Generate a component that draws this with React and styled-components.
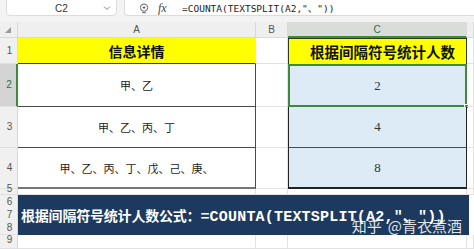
import React from 'react';
import styled, { createGlobalStyle, css } from 'styled-components';

const Global = createGlobalStyle`
  html, body { margin: 0; padding: 0; background: #fff; overflow: hidden; }
  body { font-family: "Noto Sans CJK SC", "Noto Sans", sans-serif; }
  * { box-sizing: border-box; }
`;

const GREEN = '#3f8a3a';
const GRID = '#e2e2e2';
const DARK = '#4a4a4a';

const Page = styled.div`
  width: 474px;
  height: 249px;
  display: flex;
  flex-direction: column;
  background: #f3f3f3;
  overflow: hidden;
`;

const FormulaBar = styled.div`
  height: 22px;
  flex-shrink: 0;
  display: flex;
  align-items: flex-start;
  gap: 7px;
  padding-left: 6px;
`;

const Box = styled.div`
  height: 19px;
  margin-top: -3px;
  padding-top: 3px;
  background: #fff;
  border: 1px solid #dcdcdc;
  border-radius: 4px;
  display: flex;
  align-items: center;
`;

const NameBox = styled(Box)`
  width: 111px;
  justify-content: space-between;
  padding-left: 48px;
  padding-right: 5px;
  font: 10px "Liberation Sans", sans-serif;
  color: #333;
`;

const FxBox = styled(Box)`
  flex: 1;
  border-right: none;
  border-radius: 4px 0 0 4px;
  padding-left: 14px;
  gap: 8px;
`;

const Fx = styled.span`
  font: italic 12px "Liberation Serif", serif;
  color: #444;
  width: 16px;
`;

const FormulaText = styled.span`
  font: 9.5px "DejaVu Sans Mono", "Noto Sans CJK SC", monospace;
  color: #222;
  white-space: pre;
`;

const Sheet = styled.div`
  flex: 1;
  display: grid;
  grid-template-columns: 18px 238px 32px 179px 1fr;
  grid-template-rows: 16px 26px 43px 41px 41px 6px 40px 1fr;
  background: #fff;
`;

const ColHead = styled.div`
  background: ${p => (p.$active ? '#d9dcd9' : '#efefef')};
  color: ${p => (p.$active ? '#217346' : '#555')};
  border-right: 1px solid #dadada;
  border-bottom: ${p => (p.$active ? `2px solid ${GREEN}` : '1px solid #dadada')};
  font: 10px "Liberation Sans", sans-serif;
  display: flex;
  align-items: center;
  justify-content: center;
`;

const Corner = styled(ColHead)`
  justify-content: flex-start;
  align-items: flex-end;
  padding: 0 0 4px 5px;
`;

const RowHead = styled.div`
  background: ${p => (p.$active ? '#d4d4d4' : '#f0f0f0')};
  color: ${p => (p.$active ? '#217346' : '#555')};
  border-right: ${p => (p.$active ? `2px solid ${GREEN}` : '1px solid #dadada')};
  border-bottom: 1px solid #e0e0e0;
  font: 10px "Liberation Sans", sans-serif;
  display: flex;
  flex-direction: column;
  align-items: center;
  justify-content: ${p => p.$justify || 'center'};
  line-height: 10px;
  overflow: visible;
  padding-left: 2px;
`;

const Cell = styled.div`
  display: flex;
  align-items: center;
  justify-content: center;
  position: relative;
  border-right: 1px solid ${GRID};
  border-bottom: 1px solid ${GRID};
  color: #222;
  font-size: 11px;
  white-space: nowrap;
  ${p => p.$kind === 'head' && css`
    background: #ffff00;
    font-size: 14px;
    font-weight: 700;
    color: #111;
    border-bottom: 1px solid #3a3a2a;
  `}
  ${p => p.$framed && css`
    border: 1.5px solid #2c3b1c;
    border-bottom: none;
    padding-left: 10px;
    font-size: 14.5px;
  `}
  ${p => p.$kind === 'info' && css`
    border-right: 1px solid ${DARK};
    border-bottom: ${p.$last ? '2px solid #777' : `1px solid ${DARK}`};
  `}
  ${p => p.$kind === 'count' && css`
    background: #ddebf7;
    border-left: 1px solid #222;
    border-right: 1px solid #222;
    border-bottom: ${p.$last ? '2px solid #222' : `1px solid ${DARK}`};
    font: 13px "Liberation Serif", serif;
    color: #333;
  `}
  ${p => p.$selected && css`
    border: 2px solid ${GREEN};
  `}
`;

const Handle = styled.span`
  position: absolute;
  right: -4px;
  bottom: -4px;
  width: 5px;
  height: 5px;
  background: ${GREEN};
  border: 1px solid #fff;
`;

const Band = styled.div`
  grid-column: 2 / -1;
  margin-right: 5px;
  background: #1d3a5e;
  color: #fff;
  display: flex;
  align-items: center;
  padding-left: 3px;
  position: relative;
  white-space: nowrap;
`;

const BandCJK = styled.span`
  font: 700 14px "Noto Sans CJK SC", sans-serif;
  letter-spacing: -0.2px;
`;

const BandCode = styled.span`
  font: 700 15px "Liberation Mono", "Noto Sans CJK SC", monospace;
  letter-spacing: 0.2px;
`;

const Watermark = styled.div`
  position: absolute;
  right: 7px;
  bottom: 1px;
  font: 15px "Noto Sans CJK SC", sans-serif;
  line-height: 16px;
  color: rgba(255, 255, 255, 0.88);
  display: flex;
  gap: 6px;
`;

const SearchIcon = () => (
  <svg width="11" height="11" viewBox="0 0 12 12" fill="none" stroke="#555" strokeWidth="1">
    <circle cx="5.5" cy="5" r="4" />
    <path d="M4 5h3M5.5 3.5v3M3.2 10.6h4.6" />
  </svg>
);

const Chevron = () => (
  <svg width="8" height="6" viewBox="0 0 8 6" fill="none" stroke="#888" strokeWidth="1">
    <path d="M1 1.5l3 3 3-3" />
  </svg>
);

const CornerTri = () => (
  <svg width="6" height="6" viewBox="0 0 6 6">
    <path d="M6 0V6H0z" fill="#9a9a9a" />
  </svg>
);

const rows = [
  { n: 2, info: '甲、乙', count: 2 },
  { n: 3, info: '甲、乙、丙、丁', count: 4 },
  { n: 4, info: '甲、乙、丙、丁、戊、己、庚、', count: 8 },
];

export default function App() {
  return (
    <Page>
      <Global />
      <FormulaBar>
        <NameBox>
          <span>C2</span>
          <Chevron />
        </NameBox>
        <FxBox>
          <SearchIcon />
          <Fx>fx</Fx>
          <FormulaText>=COUNTA(TEXTSPLIT(A2,"、"))</FormulaText>
        </FxBox>
      </FormulaBar>
      <Sheet>
        <Corner><CornerTri /></Corner>
        <ColHead>A</ColHead>
        <ColHead>B</ColHead>
        <ColHead $active>C</ColHead>
        <ColHead />

        <RowHead>1</RowHead>
        <Cell $kind="head">信息详情</Cell>
        <Cell />
        <Cell $kind="head" $framed>根据间隔符号统计人数</Cell>
        <Cell />

        {rows.map((r, i) => (
          <React.Fragment key={r.n}>
            <RowHead $active={i === 0}>{r.n}</RowHead>
            <Cell $kind="info" $last={i === rows.length - 1}>{r.info}</Cell>
            <Cell />
            <Cell $kind="count" $last={i === rows.length - 1} $selected={i === 0}>
              {r.count}
              {i === 0 && <Handle />}
            </Cell>
            <Cell />
          </React.Fragment>
        ))}

        <RowHead $justify="flex-end">5</RowHead>
        <Cell />
        <Cell />
        <Cell />
        <Cell />

        <RowHead $justify="space-around">
          <span>6</span>
          <span>7</span>
          <span>8</span>
        </RowHead>
        <Band>
          <BandCJK>根据间隔符号统计人数公式：</BandCJK>
          <BandCode>=COUNTA(TEXTSPLIT(A2,"、"))</BandCode>
          <Watermark>
            <span>知乎</span>
            <span>@青衣煮酒</span>
          </Watermark>
        </Band>

        <RowHead $justify="flex-start">9</RowHead>
        <Cell />
        <Cell />
        <Cell />
        <Cell />
      </Sheet>
    </Page>
  );
}
